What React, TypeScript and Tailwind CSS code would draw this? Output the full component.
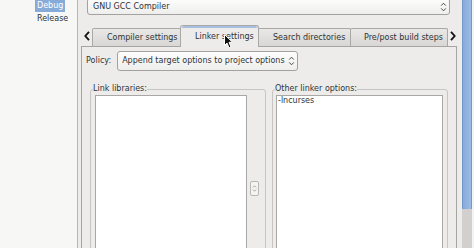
import React from "react";

function UpDown({ w = 7, h = 12, color = "#4a4a4a" }: { w?: number; h?: number; color?: string }) {
  return (
    <svg width={w} height={h} viewBox="0 0 7 12" className="shrink-0">
      <path d="M1.2 4.6 L3.5 2.2 L5.8 4.6" fill="none" stroke={color} strokeWidth="1" />
      <path d="M1.2 7.4 L3.5 9.8 L5.8 7.4" fill="none" stroke={color} strokeWidth="1" />
    </svg>
  );
}

function ChevLeft() {
  return (
    <svg width="6" height="10" viewBox="0 0 6 10">
      <path d="M5 0.8 L1.3 5 L5 9.2" fill="none" stroke="#111" strokeWidth="1.8" />
    </svg>
  );
}

function ChevRight() {
  return (
    <svg width="6" height="10" viewBox="0 0 6 10">
      <path d="M1 0.8 L4.7 5 L1 9.2" fill="none" stroke="#111" strokeWidth="1.8" />
    </svg>
  );
}

function Tab({ label, w, pl = 14 }: { label: string; w: string; pl?: number }) {
  return (
    <div
      className={`${w} h-[18px] -ml-px border border-b-0 border-[#a9a8a6] rounded-t-[2px] bg-gradient-to-b from-[#e9e8e6] to-[#d8d7d5] flex items-center whitespace-nowrap overflow-hidden`}
      style={{ paddingLeft: pl }}
    >
      {label}
    </div>
  );
}

export default function App() {
  return (
    <div className="w-[474px] h-[248px] overflow-hidden bg-[#edeceb] flex relative text-[#2e3436] text-[8px] leading-[10px] font-['DejaVu_Sans',sans-serif]">
      {/* left list */}
      <div className="w-[78px] shrink-0 h-full bg-[#f7f7f6] border-r border-[#b9b8b6] flex flex-col pl-[35px]">
        <div className="h-[12px] w-[30px] bg-[#86abd9] text-white flex items-center pl-[2px]">Debug</div>
        <div className="h-[14px] flex items-center pl-[2px]">Release</div>
      </div>

      {/* main column */}
      <div className="ml-[3px] w-[376px] shrink-0 flex flex-col">
        <div className="ml-[6px] w-[363px] h-[17px] -mt-[2px] shrink-0 rounded-[3px] border border-[#a3a2a0] bg-gradient-to-b from-[#fdfdfd] to-[#eeeeed] flex items-center pl-[5px] pr-[2px]">
          <span className="flex-1 pt-[1px]">GNU GCC Compiler</span>
          <UpDown />
        </div>

        {/* tab row */}
        <div className="mt-[10px] h-[21px] shrink-0 flex items-end relative z-10">
          <div className="w-[11px] h-full flex items-center justify-center">
            <ChevLeft />
          </div>
          <div className="w-[89px] h-[18px] border border-b-0 border-[#a9a8a6] rounded-t-[2px] bg-gradient-to-b from-[#e9e8e6] to-[#d8d7d5] flex items-center whitespace-nowrap pl-[14px]">
            Compiler settings
          </div>
          <div className="w-[79px] h-[22px] -ml-px -mb-px relative z-10 border border-b-0 border-[#a9a8a6] rounded-t-[3px] bg-[#edeceb] flex flex-col whitespace-nowrap">
            <div className="h-[2px] mx-[1px] bg-[#a6bfdf] rounded-t-[2px]" />
            <div className="flex-1 flex items-center pl-[14px] pb-[1px]">Linker settings</div>
          </div>
          <Tab label="Search directories" w="w-[93px]" />
          <Tab label="Pre/post build steps" w="w-[98px]" pl={13} />
          <div className="w-[9px] h-full flex items-center justify-center">
            <ChevRight />
          </div>
        </div>

        {/* panel */}
        <div className="h-[210px] shrink-0 border border-[#a6a5a3] bg-[#edeceb] flex flex-col">
          <div className="flex items-center pl-[4px] pt-[4px]">
            <span>Policy:</span>
            <div className="ml-[6px] w-[181px] h-[20px] rounded-[3px] border border-[#a3a2a0] bg-gradient-to-b from-[#fdfdfd] to-[#eeeeed] flex items-center pl-[4px] pr-[2px]">
              <span className="flex-1 whitespace-nowrap">Append target options to project options</span>
              <UpDown />
            </div>
          </div>
          <div className="mt-[6px] ml-[6px] w-[363px] h-px bg-[#cfcecc]" />
          <div className="flex gap-[6px] pl-[8px] mt-[7px]">
            <fieldset className="w-[176px] h-[180px] m-0 p-0 min-w-0 border border-[#c6c5c3] rounded-[3px]">
              <legend className="ml-[2px] p-0 leading-[10px]">Link libraries:</legend>
              <div className="flex mt-[1px] ml-[4px]">
                <div className="w-[152px] h-[170px] bg-white border border-[#a9a8a6]" />
                <div className="ml-[3px] mt-[86px] w-[9px] h-[15px] border border-[#b8b7b5] rounded-[2px] bg-[#f4f4f3] flex items-center justify-center">
                  <UpDown w={5} h={9} color="#8a8a8a" />
                </div>
              </div>
            </fieldset>
            <fieldset className="w-[176px] h-[180px] m-0 p-0 min-w-0 border border-[#c6c5c3] rounded-[3px]">
              <legend className="ml-[2px] p-0 leading-[10px]">Other linker options:</legend>
              <div className="mt-[1px] ml-[3px] w-[167px] h-[170px] bg-white border border-[#a9a8a6] pl-[1px]">
                -lncurses
              </div>
            </fieldset>
          </div>
        </div>
      </div>

      {/* right scrollbar */}
      <div className="ml-[5px] w-[10px] shrink-0 h-full bg-[#d1d0ce] flex flex-col">
        <div className="h-[209px] bg-gradient-to-r from-[#86aada] to-[#9dbce4] border-x border-[#7399cb]" />
      </div>
      <div className="flex-1 bg-[#f4f4f3]" />

      {/* mouse cursor */}
      <svg width="10" height="15" viewBox="0 0 10 15" className="absolute left-[224px] top-[34px] z-20">
        <path d="M0.5 0.5 L0.5 11.5 L3 9 L5 13.8 L7 13 L5 8.3 L8.5 8.3 Z" fill="#111" stroke="#fff" strokeWidth="1" />
      </svg>
    </div>
  );
}
